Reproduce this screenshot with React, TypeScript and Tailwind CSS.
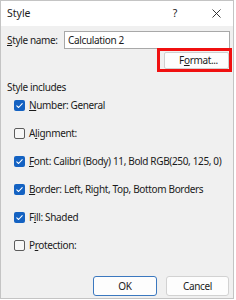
import React from 'react';

const font = { fontFamily: '"Noto Sans", "Liberation Sans", sans-serif' };

function Check({ on }: { on: boolean }) {
    if (on) {
        return (
            <span className="w-[11px] h-[11px] rounded-[2px] bg-[#1462c2] flex items-center justify-center shrink-0">
                <svg width="9" height="9" viewBox="0 0 9 9">
                    <path d="M1.8 4.8 L3.6 6.5 L7.2 2.6" fill="none" stroke="#ffffff" strokeWidth="1.1" strokeLinecap="round" strokeLinejoin="round" />
                </svg>
            </span>
        );
    }
    return <span className="w-[11px] h-[11px] rounded-[2px] border border-[#5c5c5c] bg-[#f7f7f7] shrink-0" />;
}

// label with an access key underlined
function Label({ pre, key_, post }: { pre: string; key_: string; post: string }) {
    return (
        <span className="whitespace-nowrap">
            {pre}
            <span className="underline underline-offset-[1px]">{key_}</span>
            {post}
        </span>
    );
}

export default function App() {
    const items = [
        { on: true, pre: '', k: 'N', post: 'umber: General' },
        { on: false, pre: 'A', k: 'l', post: 'ignment:' },
        { on: true, pre: '', k: 'F', post: 'ont: Calibri (Body) 11, Bold RGB(250, 125, 0)' },
        { on: true, pre: '', k: 'B', post: 'order: Left, Right, Top, Bottom Borders' },
        { on: true, pre: 'F', k: 'i', post: 'll: Shaded' },
        { on: false, pre: 'P', k: 'r', post: 'otection:' },
    ];

    return (
        <div className="w-[236px] h-[300px] bg-white text-[10px] tracking-[-0.35px] text-[#1b1b1b]" style={font}>
            <div className="relative w-[234px] h-[299px] border border-[#c4c4c4] bg-[#f0f0f0] flex flex-col">
                {/* Title bar */}
                <div className="h-[25px] bg-white flex items-center pl-[6px] text-[10.5px] tracking-normal">
                    <span className="flex-1 pt-[1px]">Style</span>
                    <span className="w-[10px] text-center mr-[32px]">?</span>
                    <svg width="9" height="9" viewBox="0 0 9 9" className="mr-[12px]">
                        <path d="M0.5 0.5 L8.5 8.5 M8.5 0.5 L0.5 8.5" stroke="#202020" strokeWidth="0.9" />
                    </svg>
                </div>

                <div className="flex flex-col pl-[6px] pr-[3px] pt-[5px]">
                    <div className="flex items-center h-[18px]">
                        <span className="w-[57px]">
                            <Label pre="" key_="S" post="tyle name:" />
                        </span>
                        <div className="flex-1 h-[18px] border border-[#a8a8a8] bg-white flex items-center pl-[3px]">
                            Calculation 2
                        </div>
                    </div>

                    <div className="flex justify-end mt-[3px] mr-[1px]">
                        <div className="w-[65px] h-[17px] border border-[#cfcfcf] bg-[#fdfdfd] rounded-[2px] flex items-center justify-center pl-[4px]">
                            <Label pre="F" key_="o" post="rmat..." />
                        </div>
                    </div>

                    <div className="mt-[12px] h-[12px] leading-[12px]">Style includes</div>

                    <div className="flex flex-col gap-[17px] mt-[7px] pl-[7px]">
                        {items.map((it, i) => (
                            <div key={i} className="flex items-center h-[11px] gap-[4px]">
                                <Check on={it.on} />
                                <Label pre={it.pre} key_={it.k} post={it.post} />
                            </div>
                        ))}
                    </div>

                    <div className="flex justify-end gap-[9px] mt-[25px] mr-[1px]">
                        <div className="w-[64px] h-[20px] rounded-[3px] border border-[#3b78bf] bg-[#fdfdfd] flex items-center justify-center">
                            OK
                        </div>
                        <div className="w-[63px] h-[20px] rounded-[3px] border border-[#d2d2d2] bg-[#fdfdfd] flex items-center justify-center">
                            Cancel
                        </div>
                    </div>
                </div>

                {/* red annotation around Format... */}
                <div className="absolute left-[156px] top-[47px] w-[75px] h-[24px] border-[3px] border-[#f01010]" />
            </div>
        </div>
    );
}
